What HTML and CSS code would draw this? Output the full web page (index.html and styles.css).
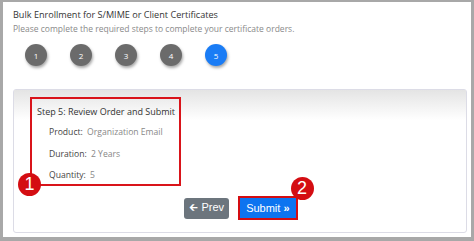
FILE: index.html
```html
<!DOCTYPE html>
<html lang="en">
<head>
    <meta charset="UTF-8">
    <title>Bulk Enrollment</title>
    <link rel="stylesheet" href="styles.css">
</head>
<body>
    <div class="frame">
        <h1 class="title">Bulk Enrollment for S/MIME or Client Certificates</h1>
        <p class="subtitle">Please complete the required steps to complete your certificate orders.</p>

        <div class="steps">
            <span class="step">1</span>
            <span class="step">2</span>
            <span class="step">3</span>
            <span class="step">4</span>
            <span class="step active">5</span>
        </div>

        <div class="panel">
            <div class="panel-head"></div>
            <div class="review">
                <div class="review-box">
                    <h2>Step 5: Review Order and Submit</h2>
                    <div class="row"><b>Product:</b> Organization Email</div>
                    <div class="row"><b>Duration:</b> 2 Years</div>
                    <div class="row"><b>Quantity:</b> 5</div>
                    <span class="callout callout-1">1</span>
                </div>
            </div>
            <div class="actions">
                <button class="btn btn-prev">&#129136; Prev</button>
                <div class="submit-wrap">
                    <button class="btn btn-submit">Submit <b>&raquo;</b></button>
                    <span class="callout callout-2">2</span>
                </div>
            </div>
        </div>
    </div>
</body>
</html>
```

FILE: styles.css
```css
html, body {
    margin: 0;
    padding: 0;
    background: #fff;
}

.frame {
    width: 474px;
    height: 241px;
    box-sizing: border-box;
    border-top: 2px solid #a8a8a8;
    border-left: 3px solid #a8a8a8;
    border-right: 3px solid #a8a8a8;
    border-bottom: 4px solid #a8a8a8;
    padding: 6px 4px 0 10px;
    font-family: "Open Sans", sans-serif;
    overflow: hidden;
}

.title {
    margin: 0;
    font-size: 9.1px;
    font-weight: 500;
    color: #333;
    line-height: 14px;
}

.subtitle {
    margin: 0;
    font-size: 8.5px;
    color: #8a8a8a;
    line-height: 13px;
}

.steps {
    display: flex;
    gap: 23px;
    padding: 9px 0 0 12px;
}

.step {
    width: 22px;
    height: 22px;
    border-radius: 50%;
    background: #6b6b6b;
    color: #fff;
    font-size: 8px;
    display: flex;
    align-items: center;
    justify-content: center;
    box-shadow: 1px 2px 3px rgba(0, 0, 0, 0.35);
}

.step.active {
    background: #1a7cf5;
}

.panel {
    margin-top: 23px;
    border: 1px solid #dcdce6;
    border-radius: 3px;
    height: 144px;
    box-sizing: border-box;
    position: relative;
}

.panel-head {
    height: 30px;
    background: linear-gradient(#e4e4e4, #fff);
    position: absolute;
    left: 0;
    right: 0;
    top: 0;
}

.review {
    position: relative;
    padding: 7px 0 0 16px;
}

.review-box {
    position: relative;
    width: 151px;
    height: 89px;
    border: 2px solid #d9141a;
    box-sizing: border-box;
    padding: 7px 0 0 5px;
}

.review-box h2 {
    margin: 0 0 8px;
    font-size: 9px;
    font-weight: 500;
    color: #333;
    line-height: 12px;
}

.row {
    font-size: 8.6px;
    color: #888;
    padding-left: 12px;
    line-height: 12px;
    margin-bottom: 9.5px;
}

.row b {
    font-weight: 500;
    color: #444;
    margin-right: 2px;
}

.callout {
    position: absolute;
    width: 23px;
    height: 23px;
    border-radius: 50%;
    background: #d40d12;
    color: #fff;
    font-family: "Liberation Sans", Arial, sans-serif;
    font-size: 18px;
    display: flex;
    align-items: center;
    justify-content: center;
}

.callout-1 {
    left: -14px;
    bottom: -12px;
}

.actions {
    position: relative;
    display: flex;
    justify-content: center;
    align-items: center;
    gap: 9px;
    margin-top: 10px;
    padding-left: 2px;
}

.btn {
    font-family: "Liberation Sans", Arial, sans-serif;
    font-size: 11px;
    color: #fff;
    border: none;
    border-radius: 3px;
    cursor: pointer;
}

.btn-prev {
    background: #6c757d;
    height: 21px;
    padding: 0 5px;
}

.submit-wrap {
    position: relative;
    border: 2px solid #d40d12;
}

.btn-submit {
    display: block;
    background: #0d74f0;
    height: 20px;
    padding: 0 6px;
    border-radius: 0;
}

.callout-2 {
    right: -18px;
    top: -21px;
}
```
